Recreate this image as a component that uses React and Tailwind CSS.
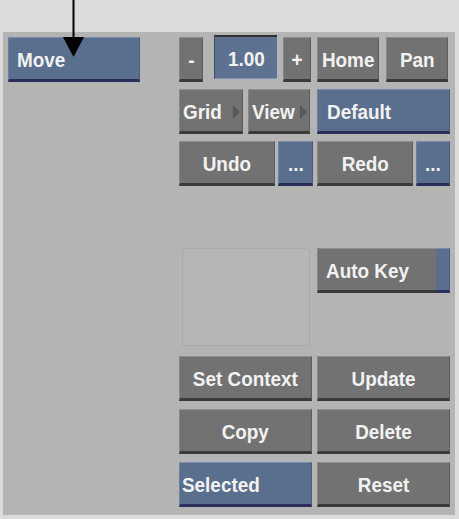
import React from "react";

const font = { fontFamily: '"Liberation Sans", Arial, sans-serif' };

const Label = ({ left, children }) => (
  <span
    className={`inline-block whitespace-nowrap scale-x-[0.9] ${
      left ? "origin-left" : "origin-center"
    }`}>
    {children}
  </span>
);

const Btn = ({ className = "", blue, left, children }) => (
  <div
    className={`flex items-center shrink-0 h-[45px] border-t border-l border-r border-b-[3px] text-[21px] font-bold text-[#f2f2f2] leading-none pt-[2px] ${
      blue
        ? "bg-[#5a6e8d] border-t-[#7a8cab] border-l-[#6d80a0] border-r-[#4a5d7c] border-b-[#2c2e5c]"
        : "bg-[#727272] border-t-[#8e8e8e] border-l-[#878787] border-r-[#5c5c5c] border-b-[#3a3a3a]"
    } ${left ? "justify-start" : "justify-center"} ${className}`}>
    {children}
  </div>
);

const Tri = () => (
  <span className="w-0 h-0 border-y-[7px] border-y-transparent border-l-[7px] border-l-[#565656]" />
);

export default function App() {
  return (
    <div
      style={font}
      className="relative w-[459px] h-[519px] bg-[#dcdcdc] pt-[32px] pl-[3px] overflow-hidden">
      <div className="w-[452px] h-[483px] bg-[#b4b4b4] flex pt-[5px] pl-[5px]">
        <div className="w-[171px] shrink-0">
          <Btn blue left className="w-[132px] pl-[8px]">
            <Label left>Move</Label>
          </Btn>
        </div>

        <div className="flex flex-col w-[272px]">
          <div className="flex items-start h-[45px]">
            <Btn className="w-[24px]">
              <Label>-</Label>
            </Btn>
            <div className="ml-[11px] -mt-[2px] w-[63px] h-[44px] bg-[#5d7290] border-t-2 border-t-[#2f2f2f] border-l border-l-[#3e4a5e] border-b border-b-[#8093b0] flex items-center justify-center text-[21px] font-bold text-[#f2f2f2] leading-none pt-[2px]">
              <Label>1.00</Label>
            </div>
            <Btn className="ml-[6px] w-[28px]">
              <Label>+</Label>
            </Btn>
            <Btn className="ml-[6px] w-[62px]">
              <Label>Home</Label>
            </Btn>
            <Btn className="ml-[7px] w-[62px]">
              <Label>Pan</Label>
            </Btn>
          </div>

          <div className="flex mt-[7px]">
            <Btn left className="w-[64px] pl-[3px]">
              <span className="w-[50px]">
                <Label left>Grid</Label>
              </span>
              <Tri />
            </Btn>
            <Btn left className="ml-[5px] w-[62px] pl-[3px]">
              <span className="w-[48px]">
                <Label left>View</Label>
              </span>
              <Tri />
            </Btn>
            <Btn blue left className="ml-[7px] w-[133px] pl-[9px]">
              <Label left>Default</Label>
            </Btn>
          </div>

          <div className="flex mt-[7px]">
            <Btn className="w-[96px]">
              <Label>Undo</Label>
            </Btn>
            <Btn blue className="ml-[3px] w-[35px]">
              <Label>...</Label>
            </Btn>
            <Btn className="ml-[4px] w-[96px]">
              <Label>Redo</Label>
            </Btn>
            <Btn blue className="ml-[3px] w-[34px]">
              <Label>...</Label>
            </Btn>
          </div>

          <div className="flex mt-[62px] h-[98px]">
            <div className="ml-[3px] w-[128px] h-[98px] border border-[#a9a9a9] bg-[#b5b5b5]" />
            <div className="ml-[7px] flex h-[47px]">
              <Btn left className="w-[119px] pl-[8px] border-r-0">
                <Label left>Auto Key</Label>
              </Btn>
              <Btn blue className="w-[14px] border-l-0" />
            </div>
          </div>

          <div className="flex mt-[10px]">
            <Btn className="w-[133px]">
              <Label>Set Context</Label>
            </Btn>
            <Btn className="ml-[5px] w-[133px]">
              <Label>Update</Label>
            </Btn>
          </div>
          <div className="flex mt-[8px]">
            <Btn className="w-[133px]">
              <Label>Copy</Label>
            </Btn>
            <Btn className="ml-[5px] w-[133px]">
              <Label>Delete</Label>
            </Btn>
          </div>
          <div className="flex mt-[8px]">
            <Btn blue left className="w-[133px] pl-[2px]">
              <Label left>Selected</Label>
            </Btn>
            <Btn className="ml-[5px] w-[133px]">
              <Label>Reset</Label>
            </Btn>
          </div>
        </div>
      </div>

      <svg
        className="absolute left-0 top-0"
        width="120"
        height="70"
        viewBox="0 0 120 70">
        <line x1="73.5" y1="0" x2="73.5" y2="42" stroke="#000" strokeWidth="2" />
        <polygon points="63,37 84,37 73.5,57" fill="#000" />
      </svg>
    </div>
  );
}
